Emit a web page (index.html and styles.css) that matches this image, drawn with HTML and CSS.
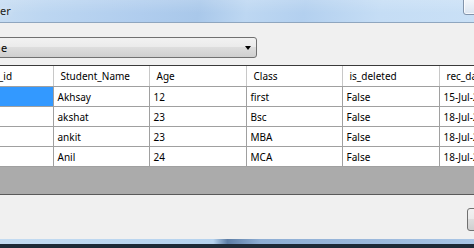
FILE: index.html
```html
<!DOCTYPE html>
<html>
<head>
<meta charset="utf-8">
<link rel="stylesheet" href="styles.css">
</head>
<body>
<div class="window">
  <div class="titlebar">
    <span class="title">er</span>
    <span class="winbtn"></span>
  </div>
  <div class="toolbar">
    <div class="combo">
      <span class="combo-text">e</span>
      <span class="combo-arrow"></span>
    </div>
  </div>
  <div class="grid">
    <table class="table">
      <colgroup>
        <col class="c0">
        <col class="c1">
        <col class="c2">
        <col class="c3">
        <col class="c4">
        <col class="c5">
      </colgroup>
      <thead>
        <tr>
          <th>Student_id</th>
          <th>Student_Name</th>
          <th>Age</th>
          <th>Class</th>
          <th>is_deleted</th>
          <th>rec_date</th>
        </tr>
      </thead>
      <tbody>
        <tr>
          <td class="sel">1</td>
          <td>Akhsay</td>
          <td>12</td>
          <td>first</td>
          <td>False</td>
          <td>15-Jul-2014</td>
        </tr>
        <tr>
          <td>2</td>
          <td>akshat</td>
          <td>23</td>
          <td>Bsc</td>
          <td>False</td>
          <td>18-Jul-2014</td>
        </tr>
        <tr>
          <td>3</td>
          <td>ankit</td>
          <td>23</td>
          <td>MBA</td>
          <td>False</td>
          <td>18-Jul-2014</td>
        </tr>
        <tr>
          <td>4</td>
          <td>Anil</td>
          <td>24</td>
          <td>MCA</td>
          <td>False</td>
          <td>18-Jul-2014</td>
        </tr>
      </tbody>
    </table>
    <div class="grid-fill"></div>
  </div>
  <div class="footer">
    <span class="button"></span>
  </div>
  <div class="taskbar"></div>
</div>
</body>
</html>
```

FILE: styles.css
```css
html, body {
  margin: 0;
  padding: 0;
  background: #f0f0f0;
}

.window {
  width: 474px;
  height: 248px;
  overflow: hidden;
  display: flex;
  flex-direction: column;
  font-family: "Noto Sans", "Open Sans", sans-serif;
  font-size: 10px;
  color: #000;
}

.titlebar {
  height: 22px;
  flex: none;
  display: flex;
  align-items: flex-start;
  border-bottom: 1px solid #8fa6bf;
  background:
    linear-gradient(to bottom, rgba(255,255,255,0.15), rgba(255,255,255,0) 60%),
    linear-gradient(100deg, #c6dcf2 0%, #bcd6f1 10%, #b0cdee 30%, #a9c8ea 42%, #bdd7f2 52%, #b3d0ef 64%, #c5ddf5 80%, #c9e0f6 100%);
}

.title {
  padding-top: 4px;
  line-height: 14px;
  font-size: 11px;
  color: #1c1c1c;
  text-shadow: 0 0 6px rgba(255,255,255,0.8);
}

.winbtn {
  margin-left: auto;
  margin-right: -24px;
  margin-top: -2px;
  width: 33px;
  height: 15px;
  border: 1px solid #8294ab;
  border-radius: 0 0 3px 3px;
  background: linear-gradient(to bottom, #f4f7fb, #dbe5f1);
  box-shadow: inset 0 0 0 1px rgba(255,255,255,0.7);
}

.toolbar {
  height: 42px;
  flex: none;
  padding-top: 14px;
  box-sizing: border-box;
  background: #f0f0f0;
}

.combo {
  margin-left: -12px;
  width: 269px;
  height: 21px;
  box-sizing: border-box;
  border: 1px solid #707070;
  border-radius: 3px;
  background: linear-gradient(to bottom, #f2f2f2 0%, #ebebeb 45%, #dddddd 50%, #cfcfcf 100%);
  display: flex;
  align-items: center;
  padding: 0 5px 0 12px;
}

.combo-text {
  flex: 1;
  line-height: 14px;
  font-size: 11px;
}

.combo-arrow {
  width: 0;
  height: 0;
  border-left: 3.5px solid transparent;
  border-right: 3.5px solid transparent;
  border-top: 4px solid #000;
  margin-top: 1px;
}

.grid {
  height: 128px;
  flex: none;
  display: flex;
  flex-direction: column;
  border-top: 1px solid #3a3a3a;
  border-bottom: 1px solid #5a5a5a;
  background: #ababab;
}

.table {
  border-collapse: collapse;
  table-layout: fixed;
  width: 594px;
  margin-left: -45px;
  background: #fff;
  flex: none;
}

.c0 { width: 98px; }
.c1 { width: 96px; }
.c2 { width: 97px; }
.c3 { width: 96px; }
.c4 { width: 97px; }
.c5 { width: 110px; }

.table th,
.table td {
  white-space: nowrap;
  overflow: hidden;
  text-align: left;
  font-weight: normal;
  padding: 0 0 0 4px;
  border-right: 1px solid #a0a0a0;
  border-bottom: 1px solid #a0a0a0;
  line-height: 14px;
}

.table th {
  height: 20px;
  padding-left: 7px;
  border-right-color: #c8c8c8;
  background: #fff;
}

.table td {
  height: 19px;
}

.table td.sel {
  background: #3399ff;
  color: #fff;
}

.grid-fill {
  flex: 1;
}

.footer {
  flex: 1;
  display: flex;
  justify-content: flex-end;
  align-items: flex-start;
  padding-top: 13px;
  background: #f0f0f0;
}

.button {
  width: 40px;
  height: 23px;
  margin-right: -33px;
  box-sizing: border-box;
  border: 1px solid #707070;
  border-radius: 3px;
  background: linear-gradient(to bottom, #f2f2f2 0%, #ebebeb 45%, #dddddd 50%, #cfcfcf 100%);
}

.taskbar {
  height: 9px;
  flex: none;
  border-top: 5px solid #a8c6e6;
  box-sizing: border-box;
  background: #1d2a37;
  border-image: linear-gradient(to right, #c3dbf1 0%, #b5d2ee 45%, #5d7ea6 48%, #8eaed4 55%, #9cb9dc 80%, #a9c6e6 100%) 1;
}
```
